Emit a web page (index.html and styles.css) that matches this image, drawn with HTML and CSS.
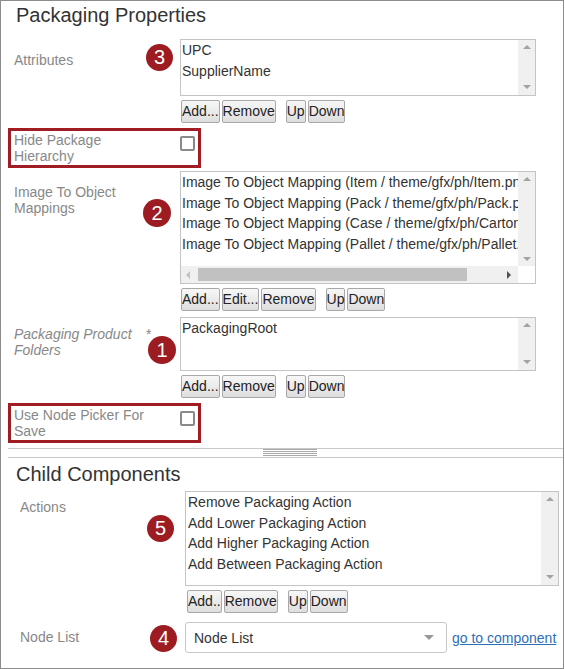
FILE: index.html
```html
<!DOCTYPE html>
<html lang="en">
<head>
    <meta charset="UTF-8">
    <meta name="viewport" content="width=device-width, initial-scale=1.0">
    <title>Packaging Properties</title>
    <link rel="stylesheet" href="styles.css">
</head>
<body>
    <div class="panel">
        <div class="section">
            <h2 class="section-title">Packaging Properties</h2>

            <div class="row row-attrs">
                <div class="label"><span class="label-text">Attributes</span></div>
                <div class="field">
                    <div class="listbox lb-attrs">
                        <ul class="items">
                            <li>UPC</li>
                            <li>SupplierName</li>
                        </ul>
                        <div class="vscroll"><span class="arr up"></span><span class="arr down"></span></div>
                    </div>
                    <div class="btns">
                        <button class="btn">Add...</button>
                        <button class="btn">Remove</button>
                        <button class="btn spaced">Up</button>
                        <button class="btn">Down</button>
                    </div>
                </div>
                <span class="badge b3">3</span>
            </div>

            <div class="flag flag-hide">
                <span class="label-text">Hide Package Hierarchy</span>
                <span class="check"></span>
            </div>

            <div class="row row-maps">
                <div class="label"><span class="label-text">Image To Object Mappings</span></div>
                <div class="field">
                    <div class="listbox lb-maps">
                        <ul class="items">
                            <li>Image To Object Mapping (Item / theme/gfx/ph/Item.png)</li>
                            <li>Image To Object Mapping (Pack / theme/gfx/ph/Pack.png)</li>
                            <li>Image To Object Mapping (Case / theme/gfx/ph/Carton.png)</li>
                            <li>Image To Object Mapping (Pallet / theme/gfx/ph/Pallet.png)</li>
                        </ul>
                        <div class="vscroll"><span class="arr up"></span><span class="arr down"></span></div>
                        <div class="hscroll"><span class="arr left"></span><span class="thumb"></span><span class="arr right"></span></div>
                        <div class="corner"></div>
                    </div>
                    <div class="btns">
                        <button class="btn">Add...</button>
                        <button class="btn">Edit...</button>
                        <button class="btn">Remove</button>
                        <button class="btn spaced">Up</button>
                        <button class="btn">Down</button>
                    </div>
                </div>
                <span class="badge b2">2</span>
            </div>

            <div class="row row-folders">
                <div class="label tight req"><span class="label-text">Packaging Product Folders</span><span class="star">*</span></div>
                <div class="field">
                    <div class="listbox lb-folders">
                        <ul class="items">
                            <li>PackagingRoot</li>
                        </ul>
                        <div class="vscroll"><span class="arr up"></span><span class="arr down"></span></div>
                    </div>
                    <div class="btns">
                        <button class="btn">Add...</button>
                        <button class="btn">Remove</button>
                        <button class="btn spaced">Up</button>
                        <button class="btn">Down</button>
                    </div>
                </div>
                <span class="badge b1">1</span>
            </div>

            <div class="flag flag-picker">
                <span class="label-text">Use Node Picker For Save</span>
                <span class="check"></span>
            </div>
        </div>

        <div class="divider"><span class="grip"></span></div>

        <div class="section section-child">
            <h2 class="section-title">Child Components</h2>

            <div class="row row-actions">
                <div class="label"><span class="label-text">Actions</span></div>
                <div class="field">
                    <div class="listbox lb-actions">
                        <ul class="items">
                            <li>Remove Packaging Action</li>
                            <li>Add Lower Packaging Action</li>
                            <li>Add Higher Packaging Action</li>
                            <li>Add Between Packaging Action</li>
                        </ul>
                        <div class="vscroll"><span class="arr up"></span><span class="arr down"></span></div>
                    </div>
                    <div class="btns btns-wide">
                        <button class="btn">Add..</button>
                        <button class="btn">Remove</button>
                        <button class="btn spaced">Up</button>
                        <button class="btn">Down</button>
                    </div>
                </div>
                <span class="badge b5">5</span>
            </div>

            <div class="row row-node">
                <div class="label"><span class="label-text">Node List</span></div>
                <div class="field field-inline">
                    <div class="select">
                        <span>Node List</span>
                        <span class="caret"></span>
                    </div>
                    <a class="link" href="#">go to component</a>
                </div>
                <span class="badge b4">4</span>
            </div>
        </div>
    </div>
</body>
</html>
```

FILE: styles.css
```css
body {
    margin: 0;
    font-family: "Liberation Sans", Arial, sans-serif;
    font-size: 14px;
    color: #333;
    background: #fff;
}
.panel {
    width: 564px;
    height: 669px;
    box-sizing: border-box;
    border: 1px solid #8c8c8c;
}
.section {
    padding-left: 7px;
}
.section-title {
    margin: 0;
    padding: 2px 0 0 8px;
    font-size: 20px;
    line-height: 24px;
    font-weight: normal;
    color: #333;
}
.section-child .section-title {
    margin-top: 2px;
}

/* form rows */
.row {
    position: relative;
    display: grid;
    grid-template-columns: 172px 356px;
}
.section-child .row {
    grid-template-columns: 177px 374px;
}
.row-attrs { margin-top: 12px; }
.row-maps { margin-top: 3px; }
.row-folders { margin-top: 6px; }
.row-actions { margin-top: 5px; }
.row-node { margin-top: 9px; }

.label {
    padding: 13px 0 0 6px;
    color: #888;
    line-height: 16px;
}
.label.tight {
    padding-top: 9px;
}
.section-child .label {
    padding: 8px 0 0 12px;
}
.row-node .label {
    padding-top: 7px;
}
.label-text {
    display: block;
    width: 140px;
}
.req {
    display: flex;
    font-style: italic;
}
.req .label-text {
    width: 132px;
}
.star {
    font-style: normal;
}

/* list boxes */
.listbox {
    display: flex;
    box-sizing: border-box;
    border: 1px solid #c4c4c4;
    background: #fff;
}
.lb-attrs { height: 57px; }
.lb-maps { height: 113px; }
.lb-folders { height: 54px; }
.lb-actions { height: 95px; }
.items {
    flex: 1;
    margin: 0;
    padding: 0 2px 0 1px;
    list-style: none;
    line-height: 20.5px;
    white-space: nowrap;
    overflow: hidden;
    color: #333;
}
.lb-actions .items {
    padding-left: 2px;
}
.vscroll {
    width: 17px;
    box-sizing: border-box;
    padding: 5px 0 6px;
    background: #f0f0f0;
    display: flex;
    flex-direction: column;
    justify-content: space-between;
    align-items: center;
}
.lb-maps {
    display: grid;
    grid-template-columns: 1fr 17px;
    grid-template-rows: 1fr 17px;
}
.lb-maps .vscroll {
    padding-bottom: 5px;
}
.hscroll {
    display: flex;
    align-items: center;
    background: #f0f0f0;
}
.hscroll .thumb {
    width: 269px;
    height: 13px;
    margin-left: 8px;
    background: #c1c1c1;
}
.corner {
    background: #fff;
}
.arr {
    width: 0;
    height: 0;
}
.arr.up {
    border-left: 4px solid transparent;
    border-right: 4px solid transparent;
    border-bottom: 4px solid #a3a3a3;
}
.arr.down {
    border-left: 4px solid transparent;
    border-right: 4px solid transparent;
    border-top: 4px solid #a3a3a3;
}
.arr.left {
    margin-left: 5px;
    border-top: 4px solid transparent;
    border-bottom: 4px solid transparent;
    border-right: 4px solid #c3c3c3;
}
.arr.right {
    margin-left: auto;
    margin-right: 7px;
    border-top: 4px solid transparent;
    border-bottom: 4px solid transparent;
    border-left: 4px solid #505050;
}

/* buttons */
.btns {
    display: flex;
    gap: 2px;
    margin: 4px 0 0 1px;
}
.btns-wide {
    margin-left: 2px;
}
.btn {
    height: 23px;
    margin: 0;
    padding: 0;
    font: inherit;
    line-height: 21px;
    color: #222;
    background: linear-gradient(#f7f7f7, #dedede);
    border: 1px solid #a8a8a8;
    border-radius: 2px;
    cursor: pointer;
}
.btn.spaced {
    margin-left: 8px;
}

/* checkbox rows */
.flag {
    display: grid;
    grid-template-columns: 1fr 15px;
    width: 193px;
    box-sizing: border-box;
    border: 3px solid #a11d24;
    padding: 1px 3px;
    color: #888;
    line-height: 16px;
}
.flag-hide { margin-top: 5px; }
.flag-picker { margin-top: 5px; }
.check {
    width: 15px;
    height: 15px;
    margin-top: 4px;
    box-sizing: border-box;
    border: 2px solid #8a8a8a;
    border-radius: 2px;
    background: #fff;
}

/* splitter */
.divider {
    margin: 5px 0 0 7px;
    height: 8px;
    border-top: 1px solid #c8c8c8;
    border-bottom: 1px solid #c8c8c8;
}
.grip {
    display: block;
    width: 54px;
    height: 7px;
    margin-left: 255px;
    background: repeating-linear-gradient(#a8a8a8 0 1px, transparent 1px 2px);
}

/* select + link */
.field-inline {
    display: flex;
    align-items: center;
}
.select {
    width: 262px;
    height: 31px;
    box-sizing: border-box;
    display: flex;
    align-items: center;
    justify-content: space-between;
    padding: 0 12px 0 8px;
    border: 1px solid #c8c8c8;
    border-radius: 3px;
    color: #333;
}
.caret {
    width: 0;
    height: 0;
    border-left: 5px solid transparent;
    border-right: 5px solid transparent;
    border-top: 5px solid #999;
}
.link {
    margin-left: 5px;
    color: #2a6fb8;
    text-decoration: underline;
}

/* numbered callouts */
.badge {
    position: absolute;
    width: 27px;
    height: 27px;
    border-radius: 50%;
    background: #9c1c21;
    color: #fff;
    font-size: 20px;
    line-height: 27px;
    text-align: center;
}
.b3 { left: 138px; top: 5px; }
.b2 { left: 135px; top: 28px; width: 28px; height: 28px; line-height: 28px; }
.b1 { left: 140px; top: 19px; width: 28px; height: 28px; line-height: 28px; }
.b5 { left: 139px; top: 24px; }
.b4 { left: 142px; top: 3px; }
```
